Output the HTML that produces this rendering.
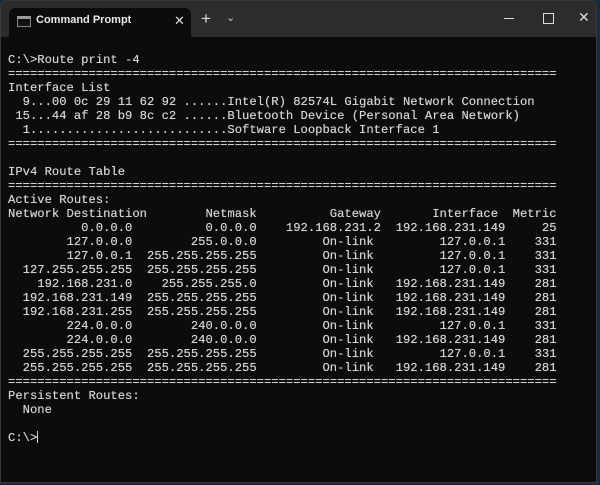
<!DOCTYPE html>
<html><head><meta charset="utf-8"><style>
html,body{margin:0;padding:0;width:600px;height:485px;overflow:hidden;background:#1b2a3a;}
.win{position:absolute;left:0;top:0;width:597px;height:483px;background:#0c0c0c;border-radius:7px 7px 0 0;overflow:hidden;border:1px solid #3a3a3a;box-sizing:border-box;}
.title{position:absolute;left:0;top:0;right:0;height:36px;background:#2c2c2c;}
.tab{position:absolute;left:8px;top:7px;width:182px;height:29px;background:#0c0c0c;border-radius:6px 6px 0 0;}
.tab .ic{position:absolute;left:8px;top:8px;width:14px;height:11px;background:#111;border:1px solid #888;box-sizing:border-box;border-top:3px solid #999;}
.tab .t{position:absolute;left:27px;top:6px;font:600 11px "Liberation Sans",sans-serif;color:#e8e8e8;}
.tab .x{position:absolute;left:165px;top:5px;font:13px "Liberation Sans",sans-serif;color:#ddd;}
.plus{position:absolute;left:200px;top:8px;font:17px "Liberation Sans",sans-serif;color:#ddd;}
.chev{position:absolute;left:225px;top:10px;font:11px "Liberation Sans",sans-serif;color:#ccc;}
.min{position:absolute;left:503px;top:17px;width:10px;height:1px;background:#ddd;}
.max{position:absolute;left:542px;top:12px;width:9px;height:9px;border:1px solid #ddd;}
.cls{position:absolute;left:577px;top:8px;font:14px "Liberation Sans",sans-serif;color:#ddd;}
pre{position:absolute;left:7px;top:52px;margin:0;font:12.2px/14px "Liberation Mono",monospace;color:#d4d4d4;text-shadow:0 0 0.4px #d4d4d4;}
.cur{display:inline-block;width:1px;height:12px;background:#ccc;vertical-align:-2px;}
</style></head><body><div class="win">
<div class="title"><div class="tab"><div class="ic"></div><div class="t">Command Prompt</div><div class="x">✕</div></div>
<div class="plus">+</div><div class="chev">⌄</div>
<div class="min"></div><div class="max"></div><div class="cls">✕</div></div>
<pre>C:\&gt;Route print -4
===========================================================================
Interface List
  9...00 0c 29 11 62 92 ......Intel(R) 82574L Gigabit Network Connection
 15...44 af 28 b9 8c c2 ......Bluetooth Device (Personal Area Network)
  1...........................Software Loopback Interface 1
===========================================================================

IPv4 Route Table
===========================================================================
Active Routes:
Network Destination        Netmask          Gateway       Interface  Metric
          0.0.0.0          0.0.0.0    192.168.231.2  192.168.231.149     25
        127.0.0.0        255.0.0.0         On-link         127.0.0.1    331
        127.0.0.1  255.255.255.255         On-link         127.0.0.1    331
  127.255.255.255  255.255.255.255         On-link         127.0.0.1    331
    192.168.231.0    255.255.255.0         On-link   192.168.231.149    281
  192.168.231.149  255.255.255.255         On-link   192.168.231.149    281
  192.168.231.255  255.255.255.255         On-link   192.168.231.149    281
        224.0.0.0        240.0.0.0         On-link         127.0.0.1    331
        224.0.0.0        240.0.0.0         On-link   192.168.231.149    281
  255.255.255.255  255.255.255.255         On-link         127.0.0.1    331
  255.255.255.255  255.255.255.255         On-link   192.168.231.149    281
===========================================================================
Persistent Routes:
  None

C:\&gt;<span class="cur"></span></pre>
</div></body></html>
